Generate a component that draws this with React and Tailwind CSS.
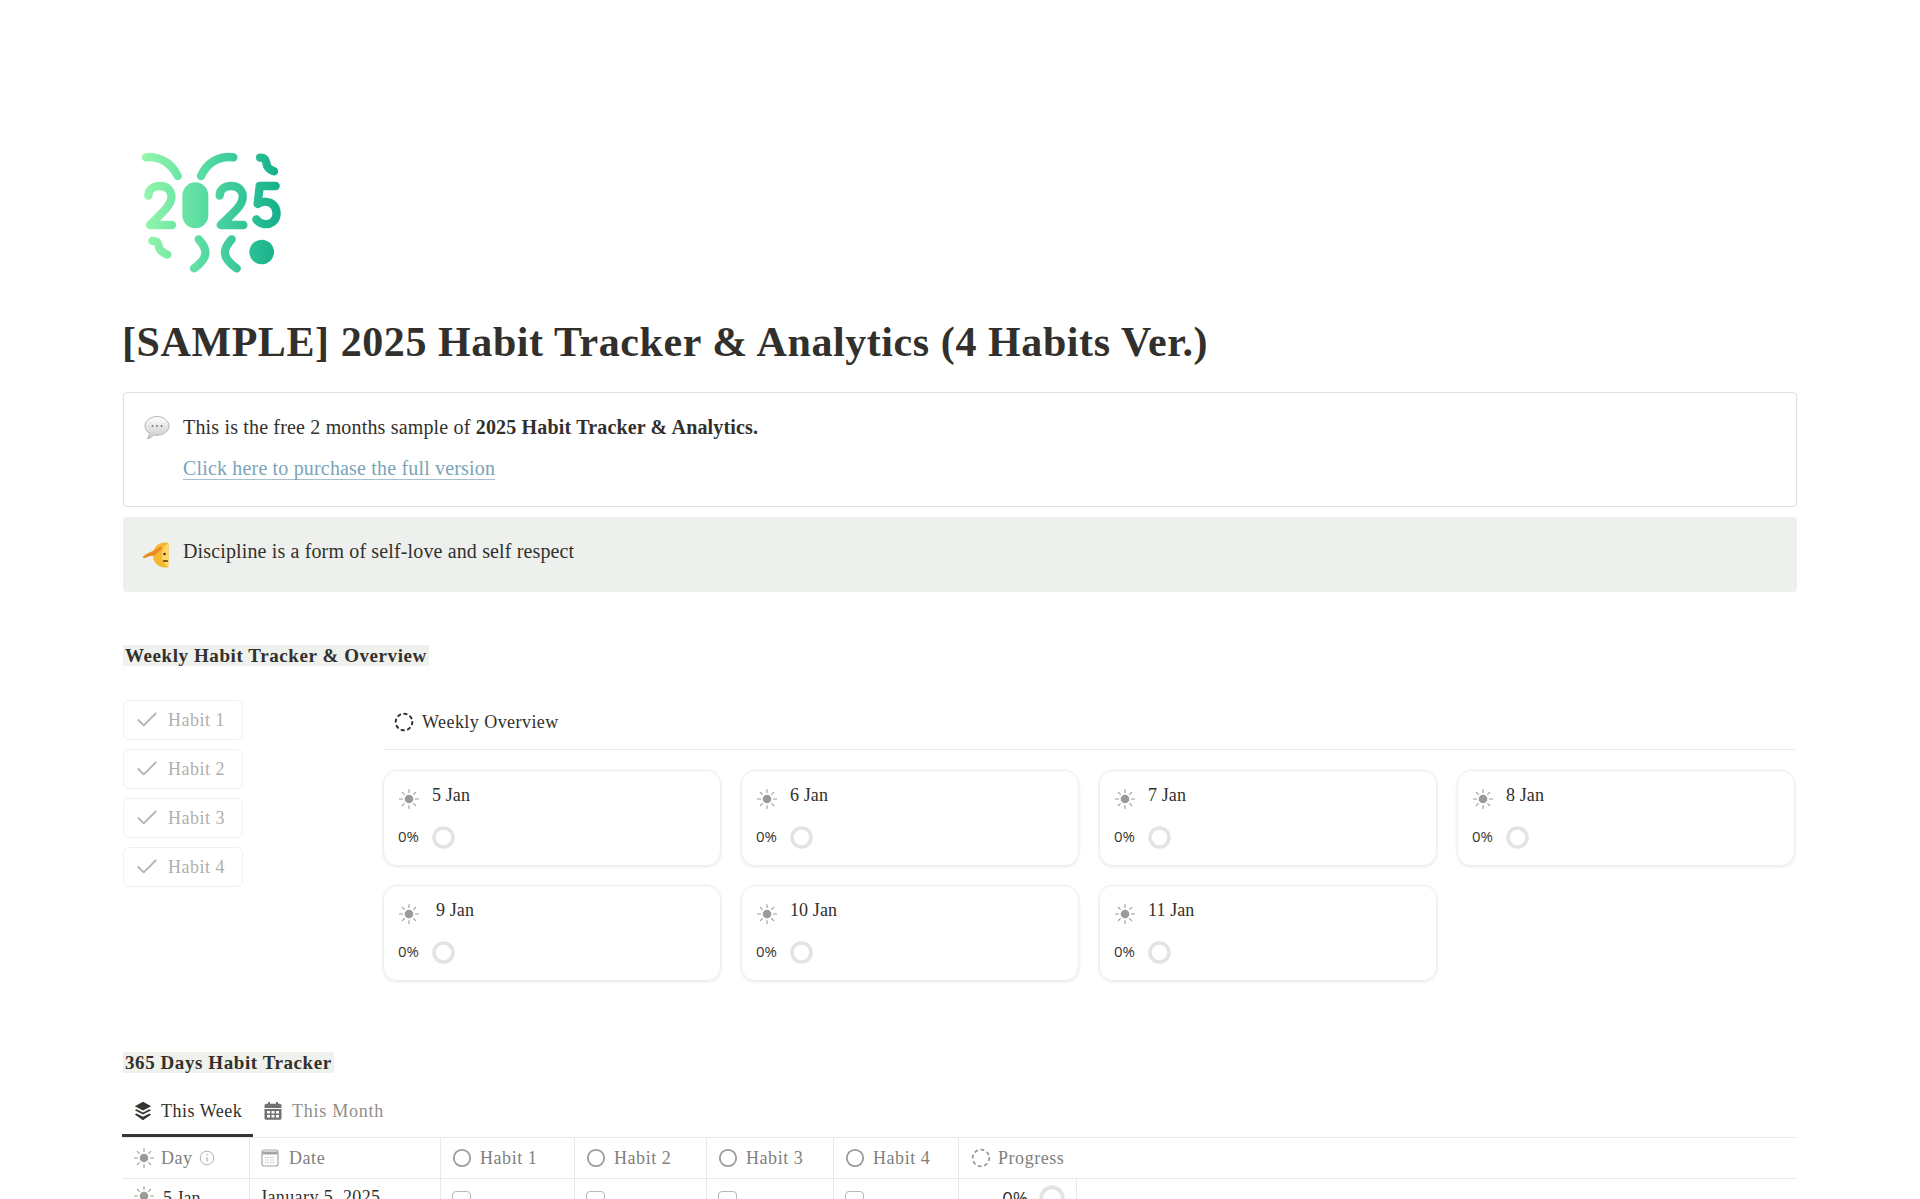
import React from 'react';
import { Check } from 'lucide-react';

const Logo = () => (
  <svg width="200" height="160" viewBox="0 0 600 480" className="-ml-[12px] block" fill="none">
    <defs>
      <linearGradient id="logoGrad" gradientUnits="userSpaceOnUse" x1="95" y1="0" x2="515" y2="0">
        <stop offset="0" stopColor="#96f7ac" />
        <stop offset="0.5" stopColor="#4fd8a0" />
        <stop offset="1" stopColor="#12ae8c" />
      </linearGradient>
    </defs>
    <g stroke="url(#logoGrad)" strokeLinecap="round" strokeLinejoin="round" strokeWidth="25">
      <path d="M108 82C150 78 185 100 203 138" />
      <path d="M370 82C325 76 290 100 273 138" />
      <path d="M450 83C478 82 462 106 478 116C483 120 488 122 492 124" />
      <path d="M115 197C115 177 132 168 150 168C173 168 186 184 184 204C182 226 160 245 120 285H186" />
      <path d="M329 197C329 177 346 168 364 168C387 168 400 184 398 204C396 226 374 245 332 285H400" />
      <path d="M497 168H449L443 222C458 213 478 212 491 226C504 241 502 266 488 276C475 286 451 285 439 268" />
      <path d="M127 333C155 332 138 354 156 364C161 369 167 372 172 374" />
      <path d="M266 328C296 360 294 385 252 415" />
      <path d="M365 328C335 360 337 385 380 415" />
    </g>
    <rect x="217" y="157" width="78" height="138" rx="39" fill="url(#logoGrad)" />
    <circle cx="455" cy="366" r="37" fill="url(#logoGrad)" />
  </svg>
);

const Balloon = () => (
  <svg width="28" height="28" viewBox="0 0 28 28" className="shrink-0 mt-[2px]">
    <defs>
      <linearGradient id="balloonGrad" x1="0" y1="0" x2="0" y2="1">
        <stop offset="0" stopColor="#ffffff" />
        <stop offset="1" stopColor="#c9c9c9" />
      </linearGradient>
    </defs>
    <path d="M14 2.500C7.400 2.500 2 6.700 2 12c0 3.100 1.800 5.700 4.500 7.400-.2 1.700-.9 3.700-2.200 5.200 2.600-.4 5-1.700 6.600-3.600 1 .2 2 .3 3.100.3 6.600 0 12-4.300 12-9.300S20.600 2.500 14 2.500z" fill="url(#balloonGrad)" stroke="#b5b5b5" strokeWidth="1" />
    <circle cx="9.500" cy="12" r="1" fill="#777" />
    <circle cx="14" cy="12" r="1" fill="#777" />
    <circle cx="18.500" cy="12" r="1" fill="#777" />
  </svg>
);

const Salute = () => (
  <svg width="28" height="28" viewBox="0 0 28 28" className="shrink-0 mt-[5px]">
    <path d="M22 1.500c-7 0-12 5-12 12.500 0 7.500 5 12.500 12 12.500 2.500 0 3.500-.6 3.500-1V2.500c0-.5-1-1-3.500-1z" fill="#f7b733" />
    <path d="M25.500 2.500v23c-4-1-6.500-6-6.500-11.500s2.500-10.500 6.500-11.500z" fill="#fdd667" />
    <circle cx="21.500" cy="13" r="1.300" fill="#4f3510" />
    <path d="M20.500 20h4" stroke="#4f3510" strokeWidth="1.300" strokeLinecap="round" />
    <path d="M0 15.500c3-2.500 7-4.500 10-5.500l7-4c1.500-.7 2.500 1.200 1.300 2.300l-4.800 4.500c-1.700 1.700-4 2.400-6.300 2.100L2 17c-1.500.4-2.700-.6-2-1.500z" fill="#ec8a22" />
  </svg>
);

const Sun = ({ size = 22, color = '#9b9a97', className = '' }) => (
  <svg width={size} height={size} viewBox="0 0 22 22" className={`shrink-0 ${className}`} stroke={color} strokeWidth="1.100" strokeLinecap="round">
    <circle cx="11" cy="11" r="4.300" fill={color} stroke="none" />
    <path d="M11 1.500v3M11 17.500v3M1.500 11h3M17.500 11h3M4.300 4.300l2 2M15.700 15.700l2 2M4.300 17.700l2-2M15.700 6.300l2-2" />
  </svg>
);

const Ring = ({ size = 23 }) => (
  <svg width={size} height={size} viewBox="0 0 23 23" className="shrink-0" fill="none">
    <circle cx="11.500" cy="11.500" r="9.500" stroke="#e3e3e2" strokeWidth="3.500" />
  </svg>
);

const DashedCircle = ({ color = '#9b9a97', size = 20, width = 1.800 }) => (
  <svg width={size} height={size} viewBox="0 0 20 20" className="shrink-0" fill="none">
    <circle cx="10" cy="10" r="8.300" stroke={color} strokeWidth={width} strokeDasharray="2.400 4.120" strokeLinecap="round" />
  </svg>
);

const CircleOutline = () => (
  <svg width="20" height="20" viewBox="0 0 20 20" className="shrink-0" fill="none">
    <circle cx="10" cy="10" r="8.200" stroke="#9b9a97" strokeWidth="1.800" />
  </svg>
);

const StackIcon = () => (
  <svg width="20" height="20" viewBox="0 0 20 20" className="shrink-0" fill="#37352f">
    <path d="M10 .8l8.200 4.400L10 9.600 1.800 5.200z" />
    <path d="M3.600 8.200L10 11.600l6.400-3.400 1.800 1L10 13.600 1.800 9.200z" />
    <path d="M3.600 12.400L10 15.800l6.400-3.400 1.800 1L10 19.200 1.800 13.400z" />
  </svg>
);

const MonthIcon = () => (
  <svg width="20" height="20" viewBox="0 0 20 20" className="shrink-0">
    <path d="M1.500 4.500c0-1 .8-1.800 1.800-1.800H5V1h2v1.700h6V1h2v1.700h1.700c1 0 1.800.8 1.800 1.800V7h-17z" fill="#73726e" />
    <path fillRule="evenodd" d="M1.500 8h17v9c0 1-.8 1.800-1.800 1.800H3.300c-1 0-1.800-.8-1.800-1.800zM4 10v2.500h3V10zm4.500 0v2.500h3V10zm4.500 0v2.500h3V10zM4 14v2.500h3V14zm4.500 0v2.500h3V14zm4.500 0v2.500h3V14z" fill="#73726e" />
  </svg>
);

const DateIcon = () => (
  <svg width="18" height="18" viewBox="0 0 18 18" className="shrink-0" fill="none">
    <rect x="1" y="1" width="16" height="16" rx="2" stroke="#a5a4a1" strokeWidth="1.200" />
    <path d="M1.500 2.500h15v3h-15z" fill="#a5a4a1" />
    <path d="M4 8.500h10M4 11h10M4 13.500h10" stroke="#c4c3c0" strokeWidth="1.100" strokeDasharray="1.500 1" />
  </svg>
);

const InfoIcon = () => (
  <svg width="16" height="16" viewBox="0 0 16 16" className="shrink-0" fill="none">
    <circle cx="8" cy="8" r="6.800" stroke="#b3b2af" strokeWidth="1" />
    <path d="M8 7v4.500" stroke="#b3b2af" strokeWidth="1.200" />
    <circle cx="8" cy="4.800" r=".8" fill="#b3b2af" />
  </svg>
);

const Section = ({ children, className }) => (
  <div className={className}>
    <span className="bg-[#eff1ec] font-bold text-[19px] tracking-[0.58px] text-[#32302c] px-[2px] ml-[1px]">{children}</span>
  </div>
);

const DayCard = ({ label, shift }) => (
  <div className="h-[96px] rounded-[14px] border border-[#ededec] shadow-[0_1px_3px_rgba(0,0,0,0.1)] pl-[14px] pt-[13px]">
    <div className="flex items-start h-[26px]">
      <Sun className="mt-[4px]" />
      <span className={`${shift ? 'ml-[16px]' : 'ml-[12px]'} text-[18px] leading-[24px] tracking-[0.1px] -mt-[1px]`}>{label}</span>
    </div>
    <div className="flex items-center mt-[15px] h-[24px]">
      <span className="w-[34px] text-[15px] -mt-[1px] font-['Open_Sans',sans-serif] text-[#37352f]">0%</span>
      <Ring />
    </div>
  </div>
);

const columns = [
  { w: 'w-[128px]', icon: <Sun />, label: 'Day', extra: <InfoIcon />, gap: 'gap-[6px]' },
  { w: 'w-[191px]', icon: <DateIcon />, label: 'Date', gap: 'gap-[10px]' },
  { w: 'w-[134px]', icon: <CircleOutline />, label: 'Habit 1', gap: 'gap-[8px]' },
  { w: 'w-[132px]', icon: <CircleOutline />, label: 'Habit 2', gap: 'gap-[8px]' },
  { w: 'w-[127px]', icon: <CircleOutline />, label: 'Habit 3', gap: 'gap-[8px]' },
  { w: 'w-[125px]', icon: <CircleOutline />, label: 'Habit 4', gap: 'gap-[8px]' },
];

const Checkbox = () => <div className="w-[19px] h-[19px] rounded-[4px] border border-[#b9b8b5] bg-white" />;

const days = [
  { label: '5 Jan' }, { label: '6 Jan' }, { label: '7 Jan' }, { label: '8 Jan' },
  { label: '9 Jan', shift: true }, { label: '10 Jan' }, { label: '11 Jan' },
];

export default function App() {
  return (
    <div className="w-[1920px] h-[1199px] overflow-hidden bg-white pl-[122px] pr-[123px] text-[#32302c] font-['Liberation_Serif',serif]">
      <div className="pt-[130px]"><Logo /></div>

      <h1 className="text-[42px] leading-[52px] font-bold tracking-[0.58px] mt-[26px] text-[#32302c] whitespace-nowrap">
        [SAMPLE] 2025 Habit Tracker &amp; Analytics (4 Habits Ver.)
      </h1>

      <div className="mt-[24px] h-[115px] rounded-[4px] border border-[#dfdfde] flex pl-[19px] pt-[19px] ml-px">
        <Balloon />
        <div className="ml-[12px] text-[20px] tracking-[0.17px]">
          <p className="leading-[30px]">This is the free 2 months sample of <b className="font-bold">2025 Habit Tracker &amp; Analytics.</b></p>
          <p className="leading-[30px] mt-[11px]">
            <a className="text-[#7ba3b8] border-b border-[#a9bfcb]">Click here to purchase the full version</a>
          </p>
        </div>
      </div>

      <div className="mt-[10px] h-[75px] rounded-[4px] bg-[#edf0ec] flex pl-[20px] pt-[19px] ml-px">
        <Salute />
        <p className="ml-[12px] text-[20px] leading-[30px] tracking-[0.14px]">Discipline is a form of self-love and self respect</p>
      </div>

      <Section className="mt-[49px] h-[30px] leading-[30px]">Weekly Habit Tracker &amp; Overview</Section>

      <div className="flex mt-[30px]">
        <div className="w-[261px] shrink-0 flex flex-col gap-[9px] pl-px mt-[-1px]">
          {['Habit 1', 'Habit 2', 'Habit 3', 'Habit 4'].map((h) => (
            <div key={h} className="w-[120px] h-[40px] flex items-center rounded-[6px] border border-[#f0f0ef] pl-[10px] text-[18px] text-[#b0afac] tracking-[0.5px]">
              <Check size={26} strokeWidth={1.700} className="text-[#b5b4b1]" />
              <span className="ml-[8px]">{h}</span>
            </div>
          ))}
        </div>
        <div className="flex-1 pr-[2px]">
          <div className="h-[50px] -mt-px flex items-center pl-[11px] border-b border-[#e9e9e7] pb-[5px]">
            <DashedCircle color="#32302c" width={2} />
            <span className="ml-[8px] text-[18px] tracking-[0.45px]">Weekly Overview</span>
          </div>
          <div className="grid grid-cols-4 gap-x-[20px] gap-y-[19px] mt-[20px]">
            {days.map((d) => <DayCard key={d.label} label={d.label} shift={d.shift} />)}
          </div>
        </div>
      </div>

      <Section className="mt-[67px] h-[30px] leading-[30px]">365 Days Habit Tracker</Section>

      <div className="flex mt-[10px] h-[46px] text-[18px]">
        <div className="w-[131px] h-[49px] flex items-center pl-[11px] border-b-[3px] border-[#37352f]">
          <StackIcon />
          <span className="ml-[8px] tracking-[0.5px]">This Week</span>
        </div>
        <div className="flex items-center pl-[10px]">
          <MonthIcon />
          <span className="ml-[9px] text-[#8f8e8a] tracking-[0.75px]">This Month</span>
        </div>
      </div>

      <div className="border-t border-[#e9e9e7] mt-[3px]">
        <div className="flex h-[41px] border-b border-[#e9e9e7] text-[18px] text-[#81807c] tracking-[0.55px]">
          {columns.map((c) => (
            <div key={c.label} className={`${c.w} shrink-0 flex items-center pl-[11px] ${c.gap} border-r border-[#e9e9e7]`}>
              {c.icon}
              <span>{c.label}</span>
              {c.extra}
            </div>
          ))}
          <div className="flex items-center pl-[12px] gap-[7px]">
            <DashedCircle />
            <span>Progress</span>
          </div>
        </div>
        <div className="flex h-[41px] text-[18px]">
          <div className="w-[128px] shrink-0 flex items-start pl-[11px] pt-[6px] gap-[8px] border-r border-[#e9e9e7]">
            <Sun />
            <span>5 Jan</span>
          </div>
          <div className="w-[191px] shrink-0 pl-[10px] pt-[5px] border-r border-[#e9e9e7] tracking-[0.4px]">January 5, 2025</div>
          {['w-[134px]', 'w-[132px]', 'w-[127px]', 'w-[125px]'].map((w) => (
            <div key={w} className={`${w} shrink-0 pl-[11px] pt-[12px] border-r border-[#e9e9e7]`}><Checkbox /></div>
          ))}
          <div className="w-[118px] shrink-0 flex items-start justify-end pr-[11px] pt-[6px] gap-[11px] border-r border-[#e9e9e7]">
            <span className="text-[18.5px] -mt-[1px] font-['Open_Sans',sans-serif]">0%</span>
            <Ring size={26} />
          </div>
        </div>
      </div>
    </div>
  );
}
